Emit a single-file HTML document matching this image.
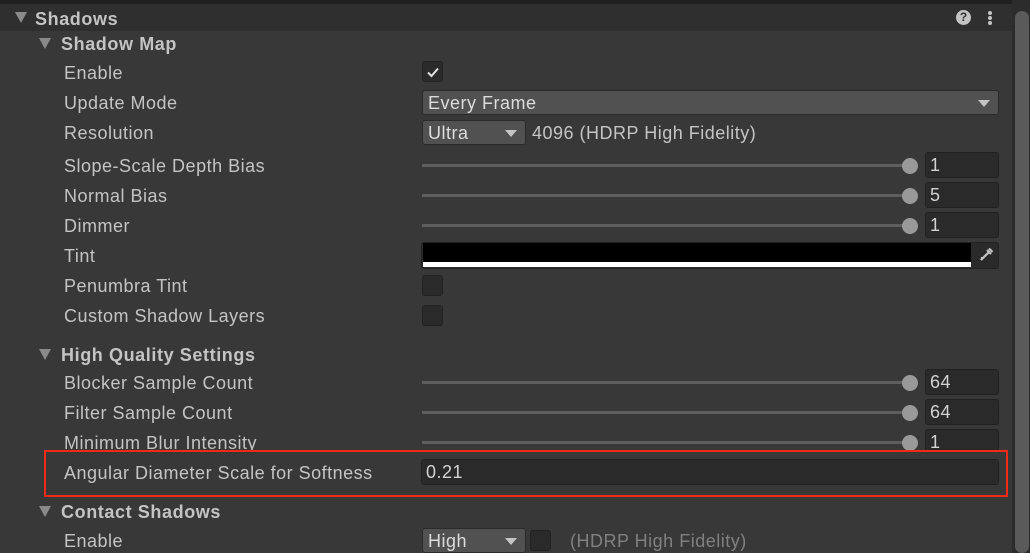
<!DOCTYPE html>
<html><head><style>
body{margin:0;width:1030px;height:553px;background:#383838;overflow:hidden;position:relative;font-family:"Liberation Sans",sans-serif;font-size:18px;color:#c4c4c4;letter-spacing:0.5px}
.a{position:absolute}
.l{position:absolute;left:64px;line-height:22px}
.h{position:absolute;left:61px;font-weight:bold;line-height:22px;letter-spacing:0.6px}
.tri{position:absolute;width:0;height:0;border-left:6px solid transparent;border-right:6px solid transparent;border-top:11px solid #8a8a8a}
.track{position:absolute;left:422px;width:486px;height:3px;background:#5e5e5e}
.knob{position:absolute;left:902px;width:16px;height:16px;border-radius:50%;background:#999}
.num{position:absolute;left:925px;width:68px;height:24px;background:#2a2a2a;border:1px solid #212121;border-radius:3px;line-height:25px;padding-left:4px;box-sizing:content-box;color:#d2d2d2}
.cb{position:absolute;left:422px;width:19px;height:19px;background:#2a2a2a;border:1px solid #222;border-radius:3px}
.dd{position:absolute;background:#515151;border:1px solid #2a2a2a;border-radius:3px;line-height:24px;padding-left:5px;color:#dcdcdc}
.dd:after{content:"";position:absolute;right:8px;top:9px;border-left:6px solid transparent;border-right:6px solid transparent;border-top:7px solid #c4c4c4}
</style></head><body>
<div class="a" style="left:0;top:0;width:1030px;height:4px;background:#202020"></div>
<div class="a" style="left:0;top:4px;width:1012px;height:27px;background:#2f2f2f"></div>
<div class="a" style="left:1012px;top:0;width:18px;height:553px;background:#2c2c2c"></div>
<div class="a" style="left:1015px;top:11px;width:14px;height:542px;background:#5a5a5a;border-radius:7px"></div>
<div class="tri" style="left:15px;top:12px"></div>
<div class="h" style="left:35px;top:8px">Shadows</div>
<div class="a" style="left:956px;top:10px;width:15px;height:15px;border-radius:50%;background:#c4c4c4;color:#2f2f2f;font-size:12px;font-weight:bold;text-align:center;line-height:15px;letter-spacing:0">?</div>
<div class="a" style="left:988px;top:11px;width:4px;height:4px;border-radius:50%;background:#c4c4c4;box-shadow:0 5px 0 #c4c4c4,0 10px 0 #c4c4c4"></div>

<div class="tri" style="left:39px;top:38px"></div>
<div class="h" style="top:33px">Shadow Map</div>
<div class="l" style="top:62px">Enable</div>
<div class="cb" style="top:61px"></div>
<svg class="a" style="left:424px;top:63px" width="18" height="18"><path d="M4 9.5l3.5 3.5L14 5.5" stroke="#e0e0e0" stroke-width="2" fill="none"/></svg>
<div class="l" style="top:92px">Update Mode</div>
<div class="dd" style="left:422px;top:90px;width:570px;height:23px">Every Frame</div>
<div class="l" style="top:122px">Resolution</div>
<div class="dd" style="left:422px;top:120px;width:97px;height:23px">Ultra</div>
<div class="a" style="left:532px;top:122px;line-height:22px">4096 (HDRP High Fidelity)</div>

<div class="l" style="top:155px">Slope-Scale Depth Bias</div>
<div class="track" style="top:164px"></div><div class="knob" style="top:158px"></div>
<div class="num" style="top:152px">1</div>
<div class="l" style="top:185px">Normal Bias</div>
<div class="track" style="top:194px"></div><div class="knob" style="top:188px"></div>
<div class="num" style="top:182px">5</div>
<div class="l" style="top:215px">Dimmer</div>
<div class="track" style="top:224px"></div><div class="knob" style="top:218px"></div>
<div class="num" style="top:212px">1</div>
<div class="l" style="top:245px">Tint</div>
<div class="a" style="left:421px;top:242px;width:576px;height:25px;background:#2a2a2a;border:1px solid #222;border-radius:3px"></div>
<div class="a" style="left:423px;top:243px;width:548px;height:19px;background:#000"></div>
<div class="a" style="left:423px;top:262px;width:548px;height:5px;background:#fff"></div>
<svg class="a" style="left:978px;top:245px" width="18" height="18"><path d="M3 15l8-8M9 5l4 4M11 3.5l3.5 3.5" stroke="#c4c4c4" stroke-width="2.2" fill="none"/><path d="M3 15l1-3" stroke="#c4c4c4" stroke-width="1.5"/></svg>
<div class="l" style="top:275px">Penumbra Tint</div>
<div class="cb" style="top:275px"></div>
<div class="l" style="top:305px">Custom Shadow Layers</div>
<div class="cb" style="top:305px"></div>

<div class="tri" style="left:39px;top:349px"></div>
<div class="h" style="top:344px">High Quality Settings</div>
<div class="l" style="top:372px">Blocker Sample Count</div>
<div class="track" style="top:381px"></div><div class="knob" style="top:375px"></div>
<div class="num" style="top:369px">64</div>
<div class="l" style="top:402px">Filter Sample Count</div>
<div class="track" style="top:411px"></div><div class="knob" style="top:405px"></div>
<div class="num" style="top:399px">64</div>
<div class="l" style="top:432px">Minimum Blur Intensity</div>
<div class="track" style="top:441px"></div><div class="knob" style="top:435px"></div>
<div class="num" style="top:429px">1</div>
<div class="a" style="left:44px;top:450px;width:960px;height:43px;border:2px solid #f02a17;background:#383838"></div>
<div class="l" style="top:462px">Angular Diameter Scale for Softness</div>
<div class="a" style="left:421px;top:459px;width:572px;height:24px;background:#2a2a2a;border:1px solid #212121;border-radius:3px;line-height:25px;padding-left:4px;color:#d2d2d2">0.21</div>

<div class="tri" style="left:39px;top:506px"></div>
<div class="h" style="top:501px">Contact Shadows</div>
<div class="l" style="top:530px">Enable</div>
<div class="dd" style="left:422px;top:528px;width:97px;height:23px">High</div>
<div class="cb" style="left:530px;top:530px"></div>
<div class="a" style="left:570px;top:530px;line-height:22px;color:#808080">(HDRP High Fidelity)</div>
</body></html>
